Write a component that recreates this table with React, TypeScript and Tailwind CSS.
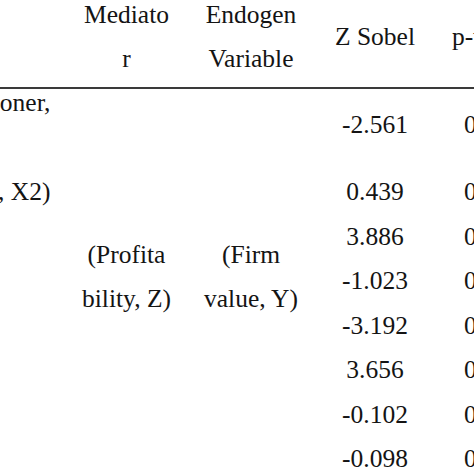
import React from "react";

const zRows = ["0.439", "3.886", "-1.023", "-3.192", "3.656", "-0.102", "-0.098", "0.214", "1.875"];
const pRows = ["0.661", "0.000", "0.306", "0.001", "0.000", "0.919", "0.922", "0.830", "0.061"];
const labels = ["X3 → Y", "X4 → Y", "X1 → Z", "X2 → Z", "X3 → Z", "X4 → Z", "X5 → Z", "X6 → Z", "X7 → Z"];

export default function App() {
  return (
    <div
      className="w-[474px] h-[474px] overflow-hidden bg-white text-[#141414] text-[25.5px] leading-[28px]"
      style={{ fontFamily: '"Liberation Serif", "Times New Roman", serif' }}
    >
      <div className="ml-[-200px] w-[748px]">
        {/* Header */}
        <div className="grid grid-cols-[280px_93px_156px_92px_127px] pt-[1px] pb-[14px] border-b-2 border-[#3a3a3a]">
          <div />
          <div className="flex flex-col items-center gap-[16px] whitespace-nowrap">
            <div>Mediato</div>
            <div>r</div>
          </div>
          <div className="flex flex-col items-center gap-[16px] whitespace-nowrap">
            <div>Endogen</div>
            <div>Variable</div>
          </div>
          <div className="flex items-center justify-center whitespace-nowrap">Z Sobel</div>
          <div className="flex items-center pl-[31px] whitespace-nowrap">p-value</div>
        </div>

        {/* Body */}
        <div className="grid grid-cols-[280px_93px_156px_92px_127px] gap-y-[16.5px]">
          {/* Row 1 */}
          <div className="col-start-1 row-start-1 flex justify-end pr-[29.5px]">
            <div className="flex flex-col gap-[16.5px] whitespace-nowrap">
              <div>(Independent Commissioner,</div>
              <div>X1)</div>
            </div>
          </div>
          <div className="col-start-4 row-start-1 flex items-center justify-center">-2.561</div>
          <div className="col-start-5 row-start-1 flex items-center pl-[43px]">0.010</div>

          {/* Row 2 */}
          <div className="col-start-1 row-start-2 flex justify-end pr-[29.5px] whitespace-nowrap">
            (Board size, X2)
          </div>

          {/* Mediator & endogenous spanning cells */}
          <div className="col-start-2 row-start-1 row-span-8 flex flex-col items-center justify-center gap-[16px] pb-[9px] whitespace-nowrap">
            <div>(Profita</div>
            <div>bility, Z)</div>
          </div>
          <div className="col-start-3 row-start-1 row-span-8 flex flex-col items-center justify-center gap-[16px] pb-[9px] whitespace-nowrap">
            <div>(Firm</div>
            <div>value, Y)</div>
          </div>

          {zRows.map((z, i) => (
            <React.Fragment key={z + i}>
              {i > 0 && (
                <div className="col-start-1 pl-[10px] whitespace-nowrap" style={{ gridRowStart: i + 2 }}>
                  {labels[i]}
                </div>
              )}
              <div className="col-start-4 flex justify-center" style={{ gridRowStart: i + 2 }}>
                {z}
              </div>
              <div className="col-start-5 pl-[43px]" style={{ gridRowStart: i + 2 }}>
                {pRows[i]}
              </div>
            </React.Fragment>
          ))}
        </div>
      </div>
    </div>
  );
}
